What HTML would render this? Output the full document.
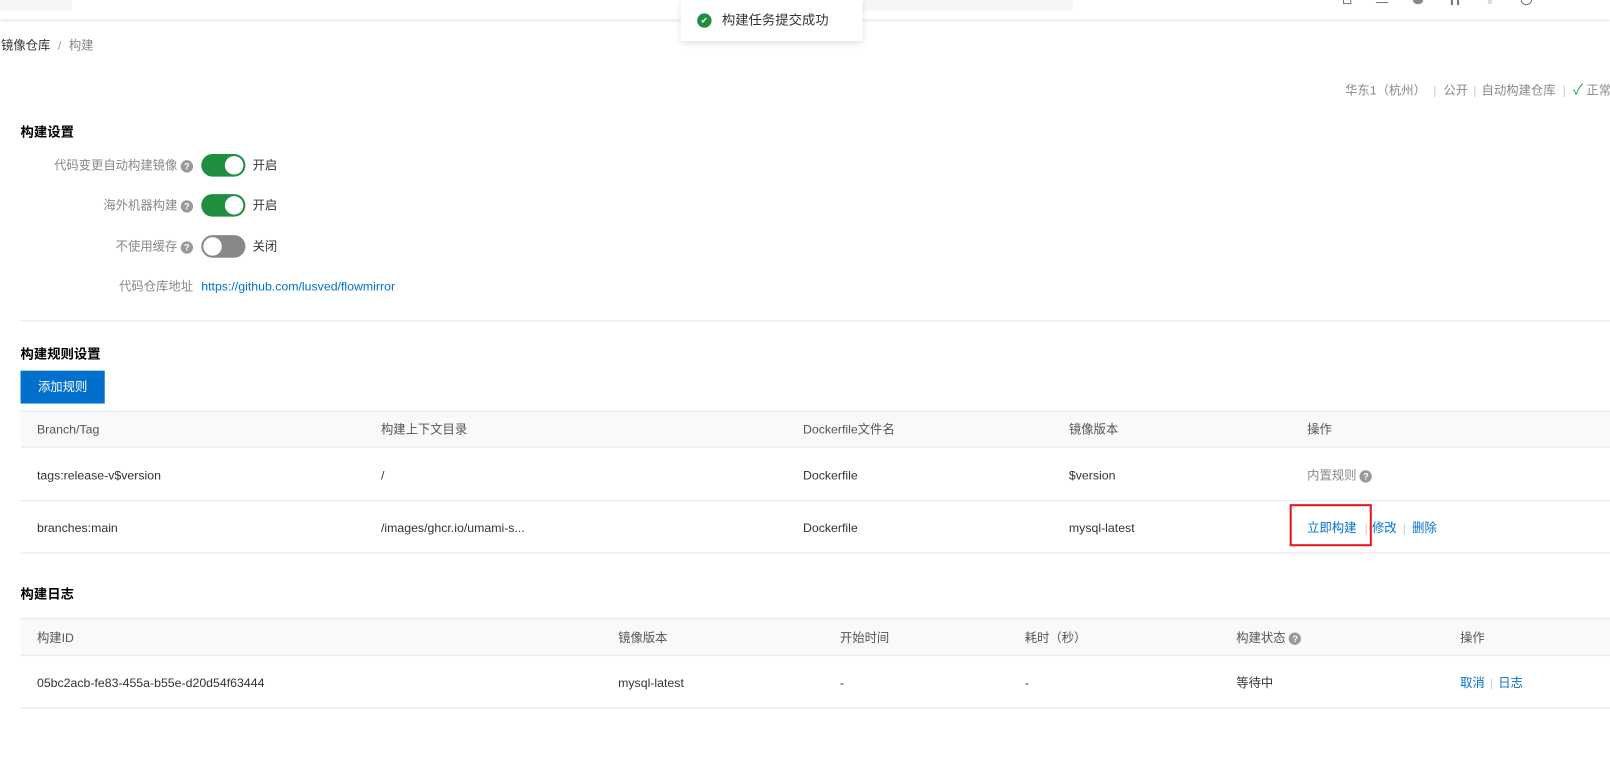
<!DOCTYPE html>
<html><head><meta charset="utf-8"><style>
*{margin:0;padding:0;box-sizing:border-box}
body{width:1610px;height:760px;overflow:hidden;background:#fff;font-family:"Liberation Sans","Noto Sans CJK SC",sans-serif;font-size:12px;color:#333;position:relative}
#w{position:absolute;left:0;top:0;width:1568px;height:740px;transform:scale(1.0268);transform-origin:0 0}
.a{position:absolute;white-space:nowrap;line-height:16px}
.hdr{position:absolute;left:0;top:0;width:1568px;height:19px;background:#fff;box-shadow:0 1px 3px rgba(0,0,0,.18)}
.q{display:inline-block;width:12px;height:12px;border-radius:50%;background:#999;color:#fff;font-size:9px;line-height:12px;text-align:center;font-weight:bold;vertical-align:0px}
.lbl{color:#888;text-align:right;width:170px;left:18px}
.sw{position:absolute;width:43px;height:22px;border-radius:11px}
.sw i{position:absolute;top:2px;width:18px;height:18px;border-radius:50%;background:#fff}
.on{background:#1f8f3f}.on i{right:2px}
.off{background:#888}.off i{left:2px}
.h{font-weight:bold;font-size:13px;color:#000;left:20px}
.th{position:absolute;left:20px;width:1548px;background:#f9f9f9;border-top:1px solid #e8e8e8;border-bottom:1px solid #e8e8e8}
.line{position:absolute;left:20px;width:1548px;height:1px;background:#e5e5e5}
.blue{color:#0070cc}
.sep{color:#ccc;margin:0 5px}
</style></head><body><div id="w">
<div class="hdr">
<div class="a" style="left:0;top:0;width:70px;height:10px;background:#f4f5f7"></div>
<div class="a" style="left:840px;top:0;width:205px;height:10px;background:#f4f5f7"></div>
<div class="a" style="left:1308px;top:0;width:8px;height:4px;border:1px solid #777;border-top:0"></div>
<div class="a" style="left:1340px;top:2px;width:12px;height:1px;background:#777"></div>
<div class="a" style="left:1376px;top:0;width:10px;height:4px;border-radius:0 0 5px 5px;background:#888"></div>
<div class="a" style="left:1413px;top:0;width:8px;height:5px;border-left:2px solid #777;border-right:2px solid #777"></div>
<div class="a" style="left:1449px;top:0;width:4px;height:4px;background:#ddd"></div>
<div class="a" style="left:1481px;top:-5px;width:11px;height:10px;border:1px solid #777;border-radius:50%"></div>
<div class="a" style="left:1590px;top:0;width:1px;height:19px;background:#e5e5e5"></div>
</div>
<div class="a" style="left:663px;top:0;width:177px;height:40px;background:#fff;box-shadow:0 2px 6px rgba(0,0,0,.15)">
<span class="a" style="left:16px;top:13px;width:14px;height:14px;border-radius:50%;background:#1f8f3f;color:#fff;font-size:9px;line-height:14px;text-align:center">✔</span>
<span class="a" style="left:40px;top:12px;font-size:13px;color:#333">构建任务提交成功</span></div>
<div class="a" style="left:1px;top:36px;color:#333">镜像仓库 <span style="color:#999;margin:0 4px">/</span> <span style="color:#888">构建</span></div>
<div class="a" style="left:1310px;top:79px;color:#888">华东1（杭州）<span class="sep" style="margin:0 7px">|</span>公开<span class="sep">|</span>自动构建仓库<span class="sep" style="margin:0 7px">|</span><span style="color:#1f9f3f;font-size:14px">✓</span> 正常</div>
<div class="a h" style="top:121px">构建设置</div>
<div class="a lbl" style="top:153px">代码变更自动构建镜像 <span class="q">?</span></div>
<div class="sw on" style="left:196px;top:150px"><i></i></div><div class="a" style="left:246px;top:153px">开启</div>
<div class="a lbl" style="top:192px">海外机器构建 <span class="q">?</span></div>
<div class="sw on" style="left:196px;top:189px"><i></i></div><div class="a" style="left:246px;top:192px">开启</div>
<div class="a lbl" style="top:232px">不使用缓存 <span class="q">?</span></div>
<div class="sw off" style="left:196px;top:229px"><i></i></div><div class="a" style="left:246px;top:232px">关闭</div>
<div class="a" style="left:18px;width:170px;text-align:right;top:271px;color:#888">代码仓库地址</div>
<div class="a blue" style="left:196px;top:271px">https://github.com/lusved/flowmirror</div>
<div class="line" style="top:312px;width:1568px"></div>
<div class="a h" style="top:337px">构建规则设置</div>
<div class="a" style="left:20px;top:361px;width:82px;height:32px;background:#0070cc;color:#fff;text-align:center;line-height:32px">添加规则</div>
<div class="th" style="top:400px;height:36px"></div>
<div class="a" style="left:36px;top:410px;color:#555">Branch/Tag</div>
<div class="a" style="left:371px;top:410px;color:#555">构建上下文目录</div>
<div class="a" style="left:782px;top:410px;color:#555">Dockerfile文件名</div>
<div class="a" style="left:1041px;top:410px;color:#555">镜像版本</div>
<div class="a" style="left:1273px;top:410px;color:#555">操作</div>
<div class="a" style="left:36px;top:455px">tags:release-v$version</div>
<div class="a" style="left:371px;top:455px">/</div>
<div class="a" style="left:782px;top:455px">Dockerfile</div>
<div class="a" style="left:1041px;top:455px">$version</div>
<div class="a" style="left:1273px;top:455px;color:#888">内置规则 <span class="q">?</span></div>
<div class="line" style="top:487px"></div>
<div class="a" style="left:36px;top:506px">branches:main</div>
<div class="a" style="left:371px;top:506px">/images/ghcr.io/umami-s...</div>
<div class="a" style="left:782px;top:506px">Dockerfile</div>
<div class="a" style="left:1041px;top:506px">mysql-latest</div>
<div class="a blue" style="left:1273px;top:506px">立即构建<span class="sep" style="margin:0 4px 0 8px">|</span>修改<span class="sep" style="margin:0 6px">|</span>删除</div>
<div class="a" style="left:1256px;top:491px;width:80px;height:41px;border:2px solid #e8141c"></div>
<div class="line" style="top:538px"></div>
<div class="a h" style="top:571px">构建日志</div>
<div class="th" style="top:602px;height:37px"></div>
<div class="a" style="left:36px;top:613px;color:#555">构建ID</div>
<div class="a" style="left:602px;top:613px;color:#555">镜像版本</div>
<div class="a" style="left:818px;top:613px;color:#555">开始时间</div>
<div class="a" style="left:998px;top:613px;color:#555">耗时（秒）</div>
<div class="a" style="left:1204px;top:613px;color:#555">构建状态 <span class="q">?</span></div>
<div class="a" style="left:1422px;top:613px;color:#555">操作</div>
<div class="a" style="left:36px;top:657px">05bc2acb-fe83-455a-b55e-d20d54f63444</div>
<div class="a" style="left:602px;top:657px">mysql-latest</div>
<div class="a" style="left:818px;top:657px">-</div>
<div class="a" style="left:998px;top:657px">-</div>
<div class="a" style="left:1204px;top:657px">等待中</div>
<div class="a blue" style="left:1422px;top:657px">取消<span class="sep">|</span>日志</div>
<div class="line" style="top:689px"></div>
</div></body></html>
